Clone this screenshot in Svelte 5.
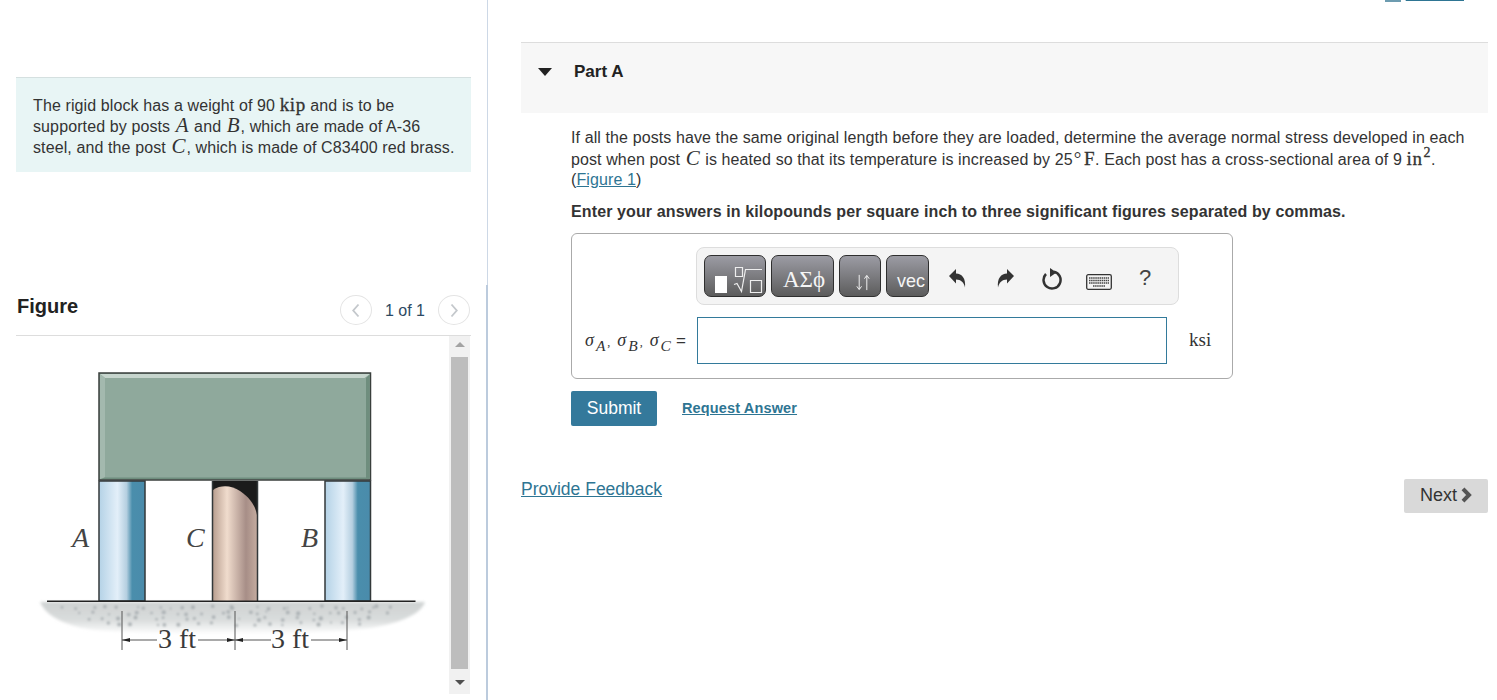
<script>
  let seed = 11;
  const rnd = () => (seed = (seed * 16807) % 2147483647) / 2147483647;
  const dots = [];
  for (let row = 0; row < 4; row++) {
    for (let i = 0; i < 26 - row * 3; i++) {
      dots.push({
        x: 62 + row * 12 + (i + rnd()) * ((340 - row * 24) / (26 - row * 3)),
        y: 606 + row * 5.500 + rnd() * 3,
        r: 1 + rnd() * 1.100
      });
    }
  }
</script>

<div class="page">
  <section class="left">
    <div class="intro">
      The rigid block has a weight of 90 <span class="unit">kip</span> and is to be<br />
      supported by posts <i class="mv">A</i> and <i class="mv">B</i>, which are made of A-36<br />
      steel, and the post <i class="mv">C</i>, which is made of C83400 red brass.
    </div>
    <div class="fig-head">
      <h2>Figure</h2>
      <div class="pager">
        <span class="circle"><svg viewBox="0 0 12 20" width="9" height="15"><path d="M10 2 3 10l7 8" /></svg></span>
        <span class="count">1 of 1</span>
        <span class="circle"><svg viewBox="0 0 12 20" width="9" height="15"><path d="M2 2l7 8-7 8" /></svg></span>
      </div>
    </div>
    <div class="fig-body">
      <svg class="figure" viewBox="16 336 433 364" width="433" height="364">
        <defs>
          <linearGradient id="steel">
            <stop offset="0" stop-color="#b4d2e6" />
            <stop offset="0.4" stop-color="#e3eff9" />
            <stop offset="0.6" stop-color="#b5cfe0" />
            <stop offset="0.72" stop-color="#4a8eac" />
            <stop offset="1" stop-color="#4a8bab" />
          </linearGradient>
          <linearGradient id="brass">
            <stop offset="0" stop-color="#b99f90" />
            <stop offset="0.32" stop-color="#f0dccd" />
            <stop offset="0.75" stop-color="#a78e87" />
            <stop offset="1" stop-color="#c4ab9f" />
          </linearGradient>
          <linearGradient id="ground" x1="0" y1="0" x2="0" y2="1">
            <stop offset="0" stop-color="#ced2d2" />
            <stop offset="0.55" stop-color="#d9dcdc" />
            <stop offset="1" stop-color="#ffffff" />
          </linearGradient>
          <filter id="soft" x="-5%" y="-20%" width="110%" height="140%"><feGaussianBlur stdDeviation="0.800" /></filter>
          <filter id="softer" x="-5%" y="-20%" width="110%" height="140%"><feGaussianBlur stdDeviation="1.500" /></filter>
        </defs>
        <path d="M40 602H425C420 616 395 624 370 628 300 636 170 636 95 630 65 626 46 616 40 602Z" fill="url(#ground)" filter="url(#softer)" />
        <g filter="url(#soft)">
          {#each dots as d}
            <circle cx={d.x} cy={d.y} r={d.r} fill="#aab0b3" />
          {/each}
        </g>
        <rect x="99" y="373" width="271.500" height="107" fill="#8fa99c" stroke="#3a3f3c" stroke-width="1.500" />
        <path d="M100 374H370L364.500 378H105L100 374Z" fill="#c6d5cd" />
        <path d="M100 374 105 378V477L100 479Z" fill="#a3b9ae" />
        <path d="M369.700 374.500V479H101L105 477.500H366V378Z" fill="#6f8e7e" />
        <rect x="212" y="481" width="46" height="120" fill="#1b1b1b" />
        <path d="M213 601V490C222 484 232 486 240 491 251 498 256 508 257 515V601Z" fill="url(#brass)" />
        <rect x="99" y="481" width="46" height="120" fill="url(#steel)" stroke="#33383a" stroke-width="1.500" />
        <rect x="325" y="481" width="45.500" height="120" fill="url(#steel)" stroke="#33383a" stroke-width="1.500" />
        <path d="M212.500 481V601M257.500 481V601" stroke="#33383a" stroke-width="1.500" />
        <path d="M47 601.200H415.500" stroke="#222" stroke-width="1.400" />
        <path d="M122 611V650M235 611V650M347 611V650M122 640H157M198 640H235M235 640H271M311 640H347" stroke="#555" stroke-width="1" fill="none" />
        <path d="M122 640l8-2v4ZM235 640l-8-2v4ZM235 640l8-2v4ZM347 640l-8-2v4Z" fill="#222" />
        <text x="72" y="547" class="fl">A</text>
        <text x="186" y="547" class="fl">C</text>
        <text x="301" y="547" class="fl">B</text>
        <text x="158" y="648" class="dim">3 ft</text>
        <text x="271" y="648" class="dim">3 ft</text>
      </svg>
      <div class="scrollbar">
        <span class="arrow up"></span>
        <span class="thumb"></span>
        <span class="arrow down"></span>
      </div>
    </div>
  </section>

  <div class="divider"><span class="seg-top"></span><span class="seg-bottom"></span></div>

  <main class="right">
    <div class="review"><span class="rev-icon"></span><a href="#r">Review</a></div>
    <div class="part">
      <span class="tri"></span>
      <strong>Part A</strong>
    </div>
    <div class="question">
      <div class="q1">
        <span class="l1">If all the posts have the same original length before they are loaded, determine the average normal stress developed in each</span>
        <span class="l2">post when post <i class="mv">C</i> is heated so that its temperature is increased by 25<span class="unit deg"><span class="ring">°</span>F</span>. Each post has a cross-sectional area of 9 <span class="unit">in<sup>2</sup></span>.</span>
        <span class="l3">(<a href="#f">Figure 1</a>)</span>
      </div>
      <p class="q2">Enter your answers in kilopounds per square inch to three significant figures separated by commas.</p>
      <div class="answer">
        <div class="toolbar">
          <span class="tb b1">
            <span class="blk"></span>
            <svg viewBox="0 0 32 30" width="32" height="30"><path d="M3.500 2.500h7v9h-7zM2 19.500l3-1 4.500 8L13.500 4.500H30M18.500 15.500h11v12h-11z" /></svg>
          </span>
          <span class="tb b2">ΑΣϕ</span>
          <span class="tb b3"><svg viewBox="0 0 16 20" width="18" height="19"><path d="M4 2v15M1.500 14 4 17.500 6.500 14M12 18V3M9.500 6 12 2.500 14.500 6" /></svg></span>
          <span class="tb b4">vec</span>
          <svg class="act a1" viewBox="0 0 18 20" width="18" height="20"><path d="M1 8 8 1v4.500c6 0 10 5 9 14-1-5-4-8-9-8v4Z" /></svg>
          <svg class="act a2" viewBox="0 0 18 20" width="18" height="20"><path d="M17 8 10 1v4.500C4 5.500 0 10.500 1 19.500c1-5 4-8 9-8v4Z" /></svg>
          <svg class="act a3" viewBox="0 0 24 24" width="24" height="24"><path class="ring-path" d="M14 5.700A8.500 8.500 0 1 1 6 8" /><path d="M10 2v9l6.500-4.500Z" /></svg>
          <svg class="act a4" viewBox="0 0 26 16" width="26" height="16"><rect x="0.700" y="0.700" width="24.600" height="14.600" rx="1.500" class="kb" /><path class="keys" d="M3 4h20M3 6.500h20M3 9h20M7 12h12" /></svg>
          <span class="help">?</span>
        </div>
        <div class="ans-row">
          <span class="ans-label"><span class="v">σ<sub>A</sub></span><span class="c">,</span><span class="v">σ<sub>B</sub></span><span class="c">,</span><span class="v">σ<sub>C</sub></span><span class="eq">=</span></span>
          <span class="input"></span>
          <span class="ksi">ksi</span>
        </div>
      </div>
      <div class="actions">
        <button>Submit</button>
        <a href="#a">Request Answer</a>
      </div>
    </div>
    <div class="foot">
      <a href="#p">Provide Feedback</a>
      <span class="next">Next <svg viewBox="0 0 12 16" width="12" height="16"><path d="M3 1.800 9 8l-6 6.200" /></svg></span>
    </div>
  </main>
</div>

<style>
  :global(body) { margin: 0; background: #fff; }
  .page {
    display: flex;
    height: 700px;
    overflow: hidden;
    font-family: "Liberation Sans", Arial, sans-serif;
    font-size: 16px;
    color: #333;
  }
  a { color: #2e7593; }
  .left {
    width: 486px;
    box-sizing: border-box;
    flex: none;
    padding: 77px 0 0 16px;
  }
  .divider { width: 2px; flex: none; display: flex; flex-direction: column; }
  .seg-top { width: 1px; height: 285px; margin-left: 1px; background: #cdd8e6; }
  .seg-bottom { width: 2px; height: 415px; background: #bccbdd; }
  .intro {
    width: 455px;
    height: 95px;
    box-sizing: border-box;
    padding: 17px 17px 0;
    background: #e8f5f5;
    border-top: 1px solid #d5e0e0;
    line-height: 21px;
    letter-spacing: 0.11px;
    white-space: nowrap;
  }
  .mv { font-family: "Liberation Serif", serif; font-size: 21px; line-height: 0; margin: 0 1px 0 1px; letter-spacing: 0; }
  .unit { font-family: "Liberation Serif", serif; font-size: 19px; line-height: 0; font-weight: 400; -webkit-text-stroke: 0.3px; letter-spacing: 0.6px; }
  .unit sup { font-size: 14px; line-height: 0; vertical-align: 8px; margin-left: 1px; }
  .deg { margin-left: 1px; }
  .ring { font-size: 19px; margin-right: 2px; -webkit-text-stroke: 0; }
  .fig-head {
    display: flex;
    justify-content: space-between;
    align-items: center;
    width: 455px;
    height: 51px;
    box-sizing: border-box;
    margin-top: 113px;
    border-bottom: 1px solid #ddd;
  }
  h2 { margin: 0 0 8px 1px; font-size: 20px; font-weight: 700; color: #222; }
  .pager { display: flex; align-items: center; gap: 13px; margin-right: 1px; }
  .count { color: #2d4a63; margin-top: 2px; }
  .circle {
    width: 30px;
    height: 28px;
    border: 1px solid #e4e4e4;
    border-radius: 50%;
    display: flex;
    align-items: center;
    justify-content: center;
  }
  .circle svg { fill: none; stroke: #c4c8cc; stroke-width: 2.500; }
  .fig-body { display: flex; width: 455px; height: 358px; align-items: flex-start; }
  .figure { display: block; flex: none; }
  .fl { font: italic 28px "Liberation Serif", serif; fill: #444; }
  .dim { font: 28px "Liberation Serif", serif; fill: #3a3a3a; }
  .scrollbar {
    width: 21px;
    height: 358px;
    background: #f1f1f1;
    display: flex;
    flex-direction: column;
    align-items: center;
    flex: none;
  }
  .thumb { width: 17px; height: 312px; background: #bdbdbd; }
  .arrow { width: 0; height: 0; border-left: 5px solid transparent; border-right: 5px solid transparent; }
  .arrow.up { border-bottom: 5px solid #a3a3a3; margin: 6px 0 10px; }
  .arrow.down { border-top: 5px solid #505050; margin: 11px 0 0; }

  .right { flex: 1; padding-left: 33px; padding-right: 9px; min-width: 0; }
  .review {
    height: 42px;
    display: flex;
    justify-content: flex-end;
    gap: 5px;
    padding-right: 24px;
    box-sizing: border-box;
    overflow: hidden;
  }
  .rev-icon { width: 16px; height: 2px; background: #6d9cb0; }
  .review a { margin-top: -17px; height: 20px; font-size: 17.800px; line-height: 20px; }
  .part {
    height: 71px;
    background: #f7f7f7;
    border-top: 1px solid #ddd;
    display: flex;
    align-items: center;
    padding-left: 17px;
    padding-bottom: 12px;
    box-sizing: border-box;
  }
  .part strong { margin-left: 22px; font-weight: 700; font-size: 17px; color: #222; }
  .tri { width: 0; height: 0; border-top: 8px solid #222; border-left: 7.500px solid transparent; border-right: 7.500px solid transparent; }
  .question { padding-left: 50px; letter-spacing: 0.105px; }
  .q1 { padding-top: 14px; white-space: nowrap; }
  .q1 span[class^="l"] { display: block; }
  .l1 { height: 21px; line-height: 21px; }
  .l2 { height: 23px; line-height: 23px; }
  .l3 { height: 17px; line-height: 17px; }
  .q2 { margin: 13px 0 0; font-weight: 700; line-height: 21px; color: #333; letter-spacing: 0.12px; }
  .answer {
    width: 662px;
    height: 146px;
    box-sizing: border-box;
    margin-top: 11px;
    border: 1px solid #aaa;
    border-radius: 6px;
    padding-top: 13px;
    letter-spacing: 0;
  }
  .toolbar {
    margin-left: 124px;
    width: 483px;
    height: 58px;
    box-sizing: border-box;
    background: #f4f4f4;
    border: 1px solid #ddd;
    border-radius: 8px;
    display: flex;
    align-items: center;
    padding-left: 7px;
    position: relative;
  }
  .tb {
    height: 42px;
    box-sizing: border-box;
    border: 1px solid #2f2f2f;
    border-radius: 7px;
    background: linear-gradient(#9c9ca4, #5c5c5c);
    color: #f5f5f5;
    display: flex;
    align-items: center;
    justify-content: center;
    margin-right: 5px;
    flex: none;
  }
  .b1 { width: 62px; justify-content: flex-start; align-items: flex-end; }
  .blk { width: 12px; height: 17px; background: #fff; margin: 0 5px 3px 10px; }
  .b1 svg { fill: none; stroke: #eee; stroke-width: 1.200; margin-bottom: 1px; flex: none; }
  .b2 { width: 63px; font: 23px "Liberation Serif", serif; padding: 7px 0 0 3px; }
  .b3 { width: 42px; align-items: flex-end; padding: 0 0 4px 6px; }
  .b3 svg { fill: none; stroke: #f5f5f5; stroke-width: 1; }
  .b4 { width: 43px; font-size: 18px; justify-content: flex-end; padding-right: 3px; padding-top: 11px; }
  .act { flex: none; position: absolute; }
  .act.a1 { left: 251px; top: 20px; fill: #333; }
  .act.a2 { left: 300px; top: 20px; fill: #333; }
  .act.a3 { left: 343px; top: 18px; fill: #333; }
  .act.a3 .ring-path { fill: none; stroke: #333; stroke-width: 2.500; }
  .act.a4 { left: 389px; top: 26px; }
  .kb { fill: #f4f4f4; stroke: #333; stroke-width: 1.300; }
  .keys { stroke: #444; stroke-width: 1.300; stroke-dasharray: 1.500 0.600; fill: none; }
  .help { position: absolute; left: 442px; top: 17px; font-size: 22px; color: #444; }
  .ans-row { display: flex; align-items: center; margin-top: 12px; height: 47px; }
  .ans-label {
    width: 125px;
    padding: 0 0 0 13px;
    box-sizing: border-box;
    font: italic 18px "Liberation Serif", serif;
    white-space: nowrap;
    color: #333;
  }
  .ans-label sub { font-size: 15.500px; line-height: 0; margin-left: 2px; }
  .c { font-size: 12px; margin: 0 7px 0 2px; font-style: normal; }
  .eq { font-size: 17px; font-style: normal; margin-left: 5px; font-family: "Liberation Sans", sans-serif; }
  .input { width: 470px; height: 47px; box-sizing: border-box; border: 1px solid #337a9b; background: #fff; }
  .ksi { margin: 0 0 2px 22px; font: 19px "Liberation Serif", serif; color: #333; }
  .actions { display: flex; align-items: center; margin-top: 12px; }
  button {
    width: 86px;
    height: 35px;
    border: 0;
    border-radius: 2px;
    background: #34799b;
    color: #fff;
    font: 17.500px "Liberation Sans", sans-serif;
    padding: 0;
  }
  .actions a { margin: 0 0 2px 25px; font-weight: 700; font-size: 14.500px; letter-spacing: 0.14px; }
  .foot { display: flex; justify-content: space-between; margin-top: 53px; align-items: flex-start; }
  .foot a { font-size: 17.500px; }
  .next {
    width: 84px;
    height: 34px;
    box-sizing: border-box;
    padding-bottom: 2px;
    background: #d9d9d9;
    border-radius: 2px;
    display: flex;
    align-items: center;
    justify-content: center;
    gap: 3px;
    font-size: 18px;
    color: #333;
  }
  .next svg { fill: none; stroke: #555; stroke-width: 4; }
</style>
